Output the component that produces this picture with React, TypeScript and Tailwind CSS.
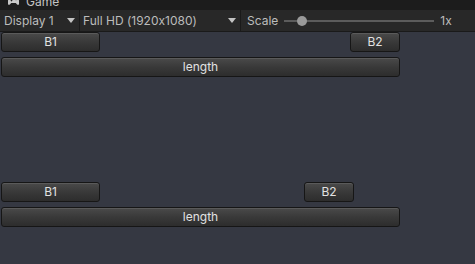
export default function App() {
  const font = { fontFamily: 'Inter, "Liberation Sans", sans-serif' }

  const btn =
    "flex h-[20px] items-center justify-center rounded-[3px] border border-[#161616] bg-gradient-to-b from-[#4a4a4a] via-[#393939] to-[#2d2d2d] text-[12px] leading-none text-[#e2e2e2] shadow-[inset_0_1px_0_#5a5a5a]"

  return (
    <div
      className="h-[264px] w-[475px] overflow-hidden bg-[#353842] [font-feature-settings:'calt'_0]"
      style={font}
    >
      {/* tab strip */}
      <div className="h-[10px] overflow-hidden bg-[#1c1c1c]">
        <div className="mt-[-5px] flex items-center gap-[7px] pl-[8px]">
          <svg width="11" height="9" viewBox="0 0 11 9" className="mt-[-1px]">
            <path
              d="M2.5 0.5h6c1.4 0 2.2 1 2.4 2.4l0.3 3.6c0.1 1.2-1.3 1.8-2.1 0.9L7.8 6H3.2L1.9 7.4C1.1 8.3-0.3 7.7-0.2 6.5L0.1 2.9C0.3 1.5 1.1 0.5 2.5 0.5z"
              fill="#c8c8c8"
            />
            <rect x="2" y="2.3" width="3" height="1" fill="#1c1c1c" />
            <rect x="3" y="1.3" width="1" height="3" fill="#1c1c1c" />
            <circle cx="8" cy="2.5" r="0.7" fill="#1c1c1c" />
          </svg>
          <span className="text-[12px] leading-[14px] text-[#c4c4c4]">Game</span>
        </div>
      </div>

      {/* toolbar */}
      <div className="flex h-[22px] items-stretch border-b border-[#1a1a1a] bg-[#282828] text-[12px] text-[#bcbcbc]">
        <div className="flex w-[80px] items-center justify-between border-r border-[#1a1a1a] pl-[4px] pr-[4px]">
          <span>Display 1</span>
          <svg width="8" height="5" viewBox="0 0 8 5">
            <path d="M0 0h8L4 5z" fill="#c4c4c4" />
          </svg>
        </div>
        <div className="flex w-[161px] items-center justify-between border-r border-[#1a1a1a] pl-[3px] pr-[4px]">
          <span>Full HD (1920x1080)</span>
          <svg width="8" height="5" viewBox="0 0 8 5">
            <path d="M0 0h8L4 5z" fill="#c4c4c4" />
          </svg>
        </div>
        <div className="flex flex-1 items-center pl-[6px]">
          <span>Scale</span>
          <div className="relative ml-[6px] h-[2px] w-[150px] bg-[#5c5c5c]">
            <div className="absolute left-[13px] top-[-4px] h-[10px] w-[10px] rounded-full bg-[#9a9a9a]" />
          </div>
          <span className="ml-[6px]">1x</span>
        </div>
      </div>

      {/* game view */}
      <div className="flex flex-col pl-[1px]">
        <div className="flex w-[399px] justify-between">
          <div className={`${btn} w-[99px]`}>B1</div>
          <div className={`${btn} w-[50px]`}>B2</div>
        </div>
        <div className={`${btn} mt-[5px] w-[399px]`}>length</div>

        <div className="mt-[105px] flex w-[353px] justify-between">
          <div className={`${btn} w-[99px]`}>B1</div>
          <div className={`${btn} w-[50px]`}>B2</div>
        </div>
        <div className={`${btn} mt-[5px] w-[399px]`}>length</div>
      </div>
    </div>
  )
}
